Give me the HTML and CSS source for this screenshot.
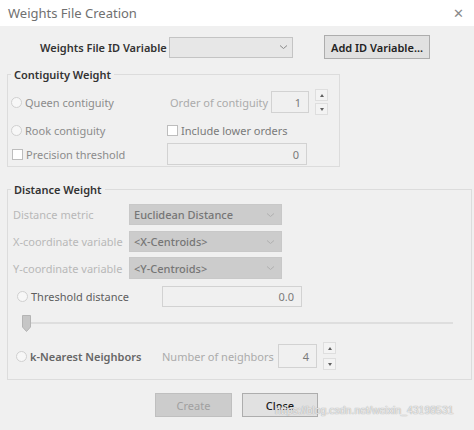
FILE: index.html
```html
<!DOCTYPE html>
<html>
<head>
<meta charset="utf-8">
<link rel="stylesheet" href="styles.css">
</head>
<body>
<div class="window">
  <div class="titlebar">
    <span class="title">Weights File Creation</span>
    <span class="close">✕</span>
  </div>
  <div class="content">
    <div class="id-row">
      <span class="id-label">Weights File ID Variable</span>
      <div class="combo id-combo"><span class="chev"><svg width="9" height="6" viewBox="0 0 9 6"><path d="M1 1.5 L4.5 4.5 L8 1.5" fill="none" stroke="#8a8a8a" stroke-width="1"/></svg></span></div>
      <div class="btn add-btn">Add ID Variable...</div>
    </div>

    <fieldset class="group contig">
      <legend>Contiguity Weight</legend>
      <div class="crow crow1">
        <div class="lcol"><span class="radio"></span><span class="opt">Queen contiguity</span></div>
        <span class="dim order-label">Order of contiguity</span>
        <div class="tbox order-box">1</div>
        <div class="spin"><div class="sp"><span class="up"></span></div><div class="sp"><span class="down"></span></div></div>
      </div>
      <div class="crow crow2">
        <div class="lcol"><span class="radio"></span><span class="opt">Rook contiguity</span></div>
        <span class="check"></span><span class="opt2">Include lower orders</span>
      </div>
      <div class="crow crow3">
        <div class="lcol lcol3"><span class="check"></span><span class="opt">Precision threshold</span></div>
        <div class="tbox prec-box">0</div>
      </div>
    </fieldset>

    <fieldset class="group dist">
      <legend>Distance Weight</legend>
      <div class="drow drow1">
        <span class="dlabel">Distance metric</span>
        <div class="dcombo"><span>Euclidean Distance</span><svg width="9" height="6" viewBox="0 0 9 6"><path d="M1 1.5 L4.5 4.5 L8 1.5" fill="none" stroke="#b0b0b0" stroke-width="1"/></svg></div>
      </div>
      <div class="drow drow2">
        <span class="dlabel">X-coordinate variable</span>
        <div class="dcombo"><span>&lt;X-Centroids&gt;</span><svg width="9" height="6" viewBox="0 0 9 6"><path d="M1 1.5 L4.5 4.5 L8 1.5" fill="none" stroke="#b0b0b0" stroke-width="1"/></svg></div>
      </div>
      <div class="drow drow3">
        <span class="dlabel">Y-coordinate variable</span>
        <div class="dcombo"><span>&lt;Y-Centroids&gt;</span><svg width="9" height="6" viewBox="0 0 9 6"><path d="M1 1.5 L4.5 4.5 L8 1.5" fill="none" stroke="#b0b0b0" stroke-width="1"/></svg></div>
      </div>
      <div class="drow thr-row">
        <div class="thr-left"><span class="radio"></span><span class="thr-text">Threshold distance</span></div>
        <div class="tbox thr-box">0.0</div>
      </div>
      <div class="slider">
        <div class="track"></div>
        <svg class="thumb" width="9" height="17" viewBox="0 0 9 17"><path d="M0.5 0.5 H8.5 V12 L4.5 16.5 L0.5 12 Z" fill="#c6c6c6" stroke="#b4b4b4"/></svg>
      </div>
      <div class="drow knn-row">
        <div class="knn-left"><span class="radio"></span><span class="knn-text">k-Nearest Neighbors</span></div>
        <span class="dim nn-label">Number of neighbors</span>
        <div class="tbox nn-box">4</div>
        <div class="spin spin2"><div class="sp"><span class="up"></span></div><div class="sp"><span class="down"></span></div></div>
      </div>
    </fieldset>

    <div class="btn-row">
      <div class="btn create">Create</div>
      <div class="btn closebtn">Close</div>
    </div>
  </div>
  <div class="watermark">https://blog.csdn.net/weixin_43198531</div>
</div>
</body>
</html>
```

FILE: styles.css
```css
html, body {
  margin: 0;
  padding: 0;
}
body {
  width: 474px;
  height: 430px;
  overflow: hidden;
  font-family: "Noto Sans", "Open Sans", sans-serif;
  font-size: 11px;
  background: #f0f0f0;
  white-space: nowrap;
}
.window {
  position: relative;
  width: 474px;
  height: 430px;
  background: #f0f0f0;
}
.titlebar {
  height: 26px;
  background: #ffffff;
  display: flex;
  align-items: center;
  justify-content: space-between;
  padding: 0 10px 0 8px;
}
.title {
  font-size: 13px;
  color: #707070;
}
.close {
  font-size: 13px;
  color: #8a8a8a;
}
.content {
  display: flex;
  flex-direction: column;
  padding: 0 7px;
}
.id-row {
  display: flex;
  align-items: center;
  margin-top: 9px;
  height: 24px;
  padding-left: 33px;
}
.id-label {
  width: 125px;
  font-weight: 600;
  color: #333;
  margin-right: 4px;
}
.combo {
  height: 21px;
  box-sizing: border-box;
  border: 1px solid #c4c4c4;
  background: #e7e7e7;
  display: flex;
  align-items: center;
  justify-content: flex-end;
}
.id-combo {
  width: 124px;
  padding-right: 4px;
}
.chev { display: flex; }
.btn {
  box-sizing: border-box;
  display: flex;
  align-items: center;
  justify-content: center;
  border: 1px solid #adadad;
  background: #e1e1e1;
  color: #222;
}
.add-btn {
  width: 106px;
  height: 24px;
  margin-left: 31px;
  font-weight: 600;
}
.group {
  margin: 0;
  padding: 0;
  min-width: 0;
  border: 1px solid #dcdcdc;
}
.group legend {
  padding: 0 3px;
  font-weight: 600;
  color: #333;
  line-height: 17px;
}
.contig legend { margin-left: 0; }
.dist legend { margin-left: -2px; }
.contig {
  width: 328px;
  margin-top: 7px;
  padding: 6px 0 1px 3px;
}
.crow {
  display: flex;
  align-items: center;
}
.crow1 { height: 26px; }
.crow2 { height: 20px; margin-top: 5px; }
.crow3 { height: 22px; margin-top: 3px; }
.lcol {
  width: 156px;
  display: flex;
  align-items: center;
}
.lcol3 { padding-left: 1px; width: 155px; }
.radio {
  width: 11px;
  height: 11px;
  box-sizing: border-box;
  border: 1px solid #d0d0d0;
  border-radius: 50%;
  background: #f7f7f7;
  margin-right: 3px;
}
.check {
  width: 11px;
  height: 11px;
  box-sizing: border-box;
  border: 1px solid #bdbdbd;
  background: #ffffff;
  margin-right: 3px;
}
.opt { color: #8c8c8c; }
.opt2 { color: #7a7a7a; }
.dim { color: #ababab; }
.order-label { margin-left: 3px; width: 97px; }
.tbox {
  box-sizing: border-box;
  border: 1px solid #d2d2d2;
  background: #f0f0f0;
  height: 21px;
  display: flex;
  align-items: center;
  justify-content: flex-end;
  padding-right: 7px;
  color: #7a7a7a;
}
.order-box { width: 38px; margin-left: 4px; height: 22px; }
.prec-box { width: 140px; height: 22px; }
.spin {
  display: flex;
  flex-direction: column;
  justify-content: space-between;
  height: 26px;
  margin-left: 6px;
}
.sp {
  width: 13px;
  height: 12px;
  box-sizing: border-box;
  border: 1px solid #dedede;
  background: #f3f3f3;
  display: flex;
  align-items: center;
  justify-content: center;
}
.up {
  width: 0; height: 0;
  border-left: 2px solid transparent;
  border-right: 2px solid transparent;
  border-bottom: 3px solid #606060;
}
.down {
  width: 0; height: 0;
  border-left: 2px solid transparent;
  border-right: 2px solid transparent;
  border-top: 3px solid #606060;
}
.dist {
  width: 458px;
  margin-top: 14px;
  padding: 6px 0 9px 5px;
}
.drow {
  display: flex;
  align-items: center;
}
.drow1 { height: 21px; }
.drow2 { height: 21px; margin-top: 6px; }
.drow3 { height: 22px; margin-top: 5px; }
.dlabel {
  width: 116px;
  color: #b8b8b8;
}
.dcombo {
  width: 153px;
  height: 100%;
  box-sizing: border-box;
  background: #cccccc;
  border: 1px solid #c8c8c8;
  display: flex;
  align-items: center;
  justify-content: space-between;
  padding: 0 6px 0 4px;
  color: #767676;
  font-weight: 500;
}
.thr-row { height: 21px; margin-top: 7px; }
.thr-left {
  width: 145px;
  display: flex;
  align-items: center;
  padding-left: 4px;
}
.thr-text { color: #5e5e5e; }
.thr-box { width: 140px; }
.slider {
  position: relative;
  height: 17px;
  margin-top: 8px;
  margin-left: 9px;
  width: 431px;
}
.track {
  position: absolute;
  left: 0;
  right: 0;
  top: 7px;
  height: 2px;
  background: #dedede;
}
.thumb {
  position: absolute;
  left: 0;
  top: 0;
}
.knn-row { height: 28px; margin-top: 10px; }
.knn-left {
  width: 146px;
  display: flex;
  align-items: center;
  padding-left: 3px;
}
.knn-text { color: #666; font-weight: 600; }
.nn-label { width: 111px; }
.nn-box { width: 39px; height: 24px; margin-left: 5px; }
.spin2 { height: 28px; }
.btn-row {
  display: flex;
  margin-top: 13px;
  padding-left: 148px;
  gap: 10px;
}
.btn-row .btn { height: 24px; }
.create {
  width: 77px;
  background: #cccccc;
  border-color: #bfbfbf;
  color: #a0a0a0;
}
.closebtn {
  width: 76px;
  color: #1a1a1a;
  font-weight: 500;
}
.watermark {
  position: absolute;
  left: 275px;
  top: 404px;
  font-family: "Liberation Sans", sans-serif;
  font-size: 10.5px;
  color: rgba(255,255,255,0.75);
  text-shadow: 0 0 1px #a8a8a8, 0 0 1px #a8a8a8;
}
```
